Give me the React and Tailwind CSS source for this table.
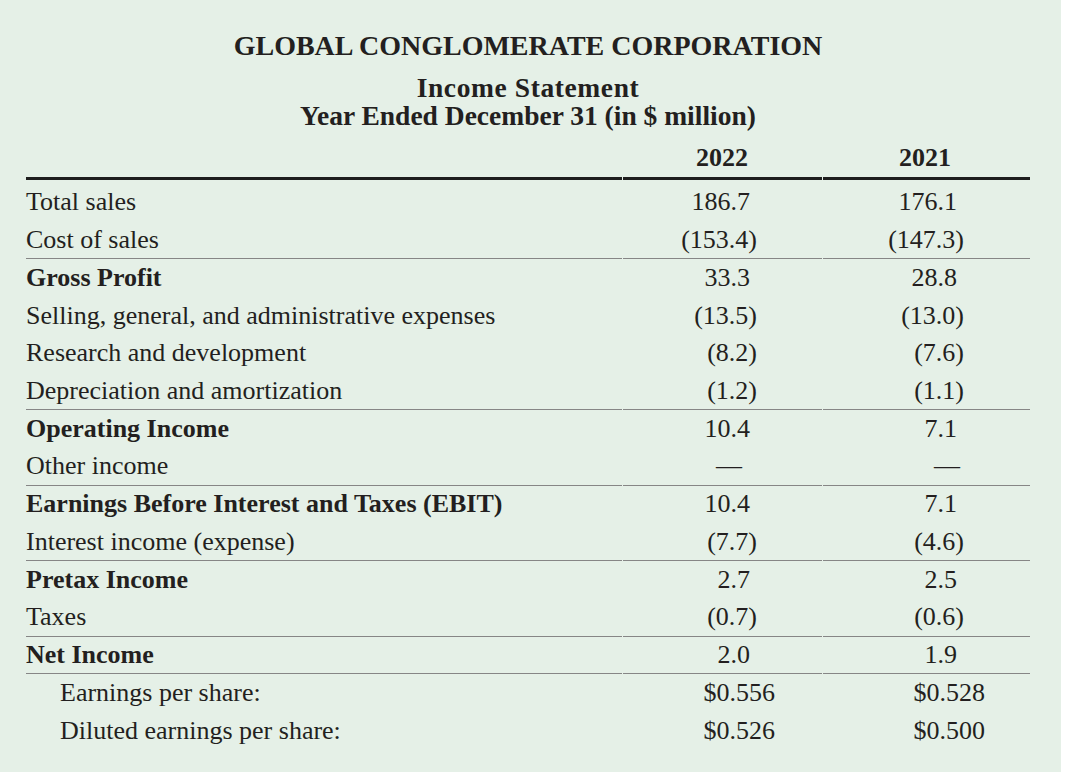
const ROWS = [
  { label: 'Total sales', a: '186.7', b: '176.1' },
  { label: 'Cost of sales', a: '(153.4)', b: '(147.3)', line: true },
  { label: 'Gross Profit', a: '33.3', b: '28.8', bold: true },
  { label: 'Selling, general, and administrative expenses', a: '(13.5)', b: '(13.0)' },
  { label: 'Research and development', a: '(8.2)', b: '(7.6)' },
  { label: 'Depreciation and amortization', a: '(1.2)', b: '(1.1)', line: true },
  { label: 'Operating Income', a: '10.4', b: '7.1', bold: true },
  { label: 'Other income', a: '—', b: '—', dash: true, line: true },
  { label: 'Earnings Before Interest and Taxes (EBIT)', a: '10.4', b: '7.1', bold: true },
  { label: 'Interest income (expense)', a: '(7.7)', b: '(4.6)', line: true },
  { label: 'Pretax Income', a: '2.7', b: '2.5', bold: true },
  { label: 'Taxes', a: '(0.7)', b: '(0.6)', line: true },
  { label: 'Net Income', a: '2.0', b: '1.9', bold: true, line: true },
  { label: 'Earnings per share:', a: '$0.556', b: '$0.528', eps: true },
  { label: 'Diluted earnings per share:', a: '$0.526', b: '$0.500', eps: true },
]

function Amount({ value }) {
  // closing paren hangs past the number column
  if (value.startsWith('(')) {
    return (
      <span>
        {value.slice(0, -1)}
        <span className="mr-[-7px]">)</span>
      </span>
    )
  }
  return <span>{value}</span>
}

function Row({ row }) {
  const line = row.line ? 'border-b border-[#868686]' : ''
  const padA = row.eps ? 'pr-[47px]' : row.dash ? 'pr-[80px]' : 'pr-[72px]'
  const padB = row.eps ? 'pr-[45px]' : row.dash ? 'pr-[70px]' : 'pr-[73px]'
  return (
    <>
      <div className={`h-[37.75px] flex items-center ${line} ${row.eps ? 'pl-[34px]' : ''}`}>
        <span className={row.bold ? 'font-bold' : ''}>{row.label}</span>
      </div>
      <div className={`h-[37.75px] flex items-center justify-end ${padA} ${line}`}>
        <Amount value={row.a} />
      </div>
      <div className={`h-[37.75px] flex items-center justify-end ${padB} ${line}`}>
        <Amount value={row.b} />
      </div>
    </>
  )
}

export default function App() {
  return (
    <div className="w-[1066px] h-[772px] bg-white flex text-[#231f20]" style={{ fontFamily: '"Liberation Serif", "Times New Roman", serif' }}>
      <div className="w-[1061px] h-full bg-[#e5f0e7] pl-[26px] pr-[31px] pt-[32px]">
        <div className="flex flex-col items-center font-bold">
          <h1 className="text-[28px] leading-[28px]">GLOBAL CONGLOMERATE CORPORATION</h1>
          <div className="mt-[14px] text-[27.5px] leading-[27.5px] tracking-[0.6px]">Income Statement</div>
          <div className="text-[27.5px] leading-[27.5px]">Year Ended December 31 (in $ million)</div>
        </div>

        <div className="mt-[16px] grid grid-cols-[596px_199px_207px] gap-x-[1px] text-[26px] leading-[26px]">
          <div className="h-[35px] border-b-[3px] border-[#1e1e1e]" />
          <div className="h-[35px] border-b-[3px] border-[#1e1e1e] flex items-start justify-end pr-[74px] font-bold">2022</div>
          <div className="h-[35px] border-b-[3px] border-[#1e1e1e] flex items-start justify-end pr-[79px] font-bold">2021</div>
          <div className="h-[3.5px]" />
          <div className="h-[3.5px]" />
          <div className="h-[3.5px]" />
          {ROWS.map(row => (
            <Row key={row.label} row={row} />
          ))}
        </div>
      </div>
    </div>
  )
}
